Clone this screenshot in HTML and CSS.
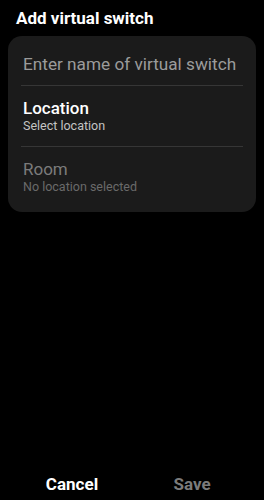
FILE: index.html
```html
<!DOCTYPE html>
<html lang="en">
<head>
    <meta charset="UTF-8">
    <meta name="viewport" content="width=device-width, initial-scale=1.0">
    <title>Add virtual switch</title>
    <link rel="stylesheet" href="styles.css">
</head>
<body>
    <div class="screen">
        <h1 class="title">Add virtual switch</h1>

        <div class="card">
            <div class="name-field">
                <input type="text" id="switch-name" placeholder="Enter name of virtual switch">
            </div>
            <div class="row">
                <div class="row-label">Location</div>
                <div class="row-value">Select location</div>
            </div>
            <div class="row disabled">
                <div class="row-label">Room</div>
                <div class="row-value">No location selected</div>
            </div>
        </div>

        <div class="actions">
            <button class="action">Cancel</button>
            <button class="action disabled">Save</button>
        </div>
    </div>
</body>
</html>
```

FILE: styles.css
```css
html, body {
    margin: 0;
    padding: 0;
    background-color: #000;
}
body {
    font-family: Roboto, 'Noto Sans', sans-serif;
    color: #fff;
}
.screen {
    height: 500px;
    display: flex;
    flex-direction: column;
    padding: 0 8px;
    box-sizing: border-box;
}
.title {
    margin: 6px 0 0 8px;
    font-size: 17px;
    font-weight: 700;
    line-height: 24px;
}
.card {
    margin-top: 6px;
    background-color: #1b1b1b;
    border-radius: 14px;
    padding: 0 13px;
}
.name-field {
    border-bottom: 1px solid #363636;
    padding: 17px 0 10px 2px;
}
input {
    width: 100%;
    background: transparent;
    border: none;
    outline: none;
    padding: 0;
    font-family: inherit;
    font-size: 17.2px;
    line-height: 22px;
    color: #fff;
}
input::placeholder {
    color: #9b9b9b;
}
.row {
    padding: 12px 0 12px 2px;
    border-bottom: 1px solid #363636;
}
.row:last-child {
    border-bottom: none;
    padding-bottom: 17px;
}
.row-label {
    font-size: 17px;
    font-weight: 500;
    line-height: 20px;
}
.row-value {
    font-size: 12.5px;
    line-height: 16px;
    color: #c4c4c4;
}
.row.disabled .row-label {
    color: #7b7b7b;
    font-weight: 400;
}
.row.disabled .row-value {
    color: #6a6a6a;
}
.actions {
    margin-top: auto;
    display: flex;
    padding: 0 4px;
}
.action {
    flex: 1;
    background: none;
    border: none;
    font-family: inherit;
    font-size: 17px;
    font-weight: 700;
    color: #fff;
    padding: 8px 0 6px;
    cursor: pointer;
}
.action.disabled {
    color: #7b7b7b;
}
```
